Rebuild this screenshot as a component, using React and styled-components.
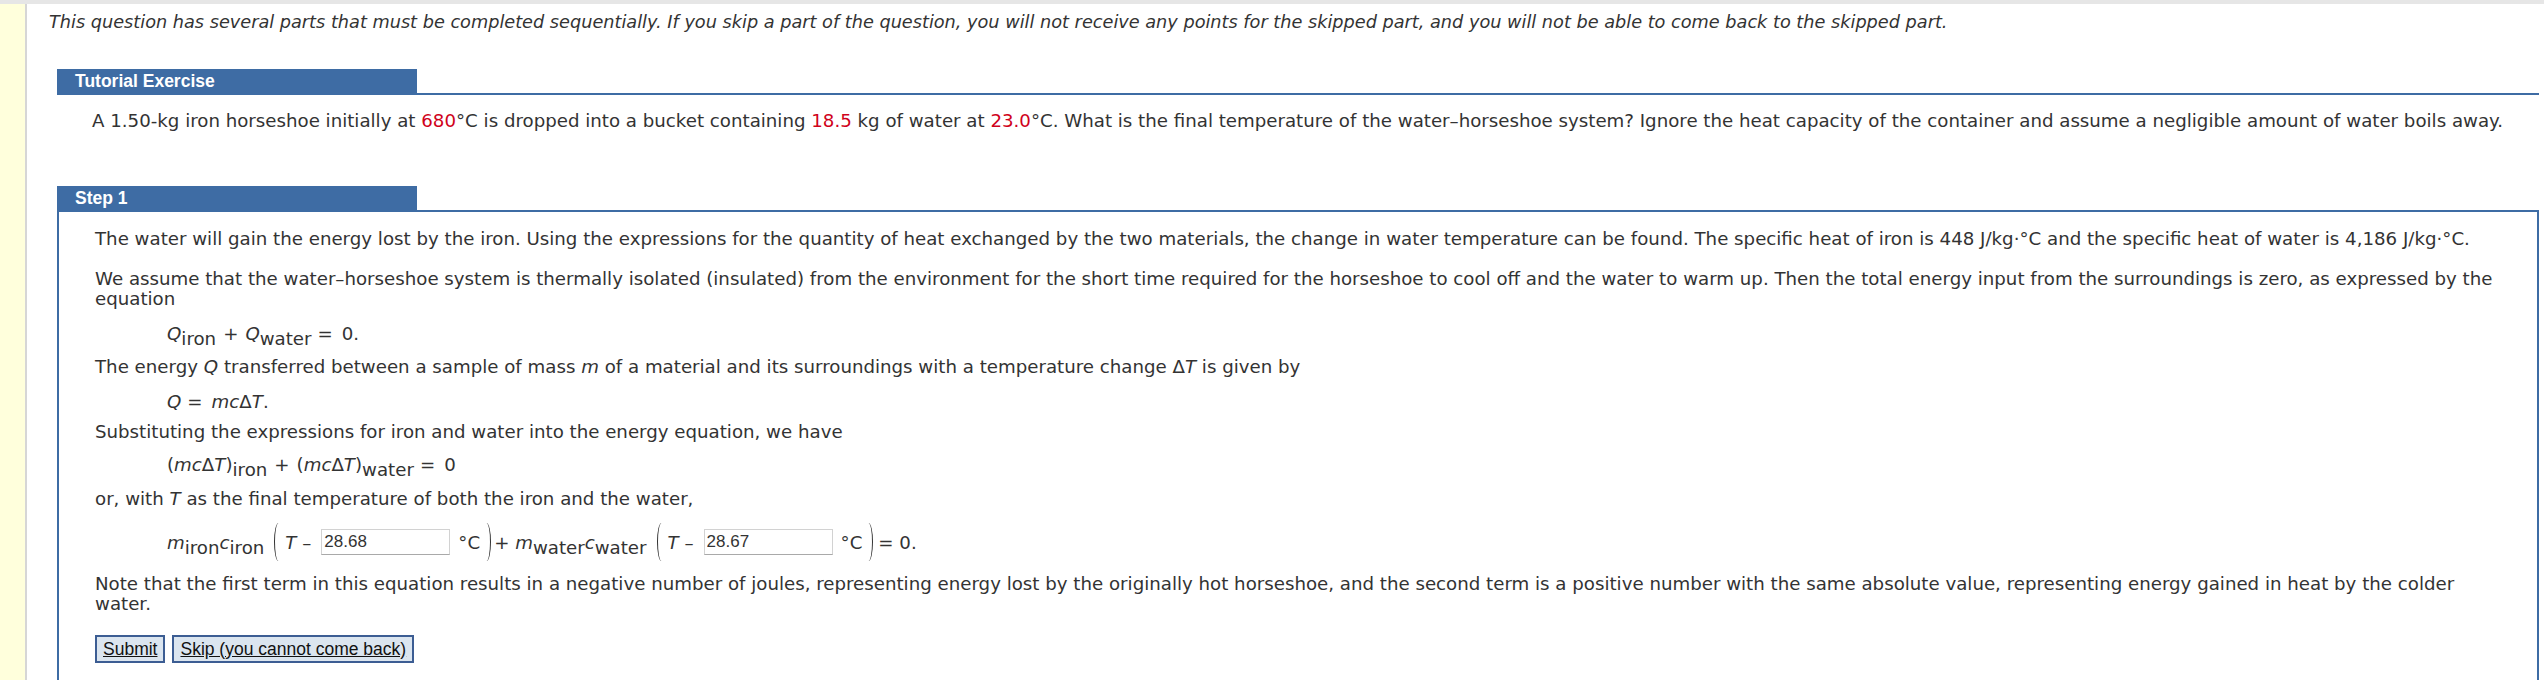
import React from "react";
import styled, { createGlobalStyle, css } from "styled-components";

const blue = "#3e6ca4";

const GlobalStyle = createGlobalStyle`
  html, body {
    margin: 0;
    padding: 0;
    background: #fff;
  }
  body {
    font-family: "DejaVu Sans", Verdana, sans-serif;
    color: #333;
  }
`;

const Page = styled.div`
  display: flex;
  min-height: 676px;
  border-top: 4px solid #e6e6e6;
`;

const Gutter = styled.div`
  flex: none;
  width: 25px;
  background: #ffffdc;
  border-right: 2px solid #d6d6d6;
`;

const Main = styled.main`
  flex: 1;
  padding: 8px 5px 0 22px;
`;

const Notice = styled.p`
  margin: 0;
  font-size: 17.7px;
  line-height: 20px;
  font-style: italic;
  white-space: nowrap;
`;

const Section = styled.section`
  margin: ${(p) => p.$mt}px 0 0 8px;
`;

const SectionHead = styled.div`
  display: flex;
  border-bottom: 2px solid ${blue};
`;

const Tab = styled.div`
  width: 342px;
  height: 24px;
  padding-left: 18px;
  background: ${blue};
  color: #fff;
  font: bold 17.5px/24px "Liberation Sans", Arial, sans-serif;
`;

const SectionBody = styled.div`
  padding: ${(p) => (p.$boxed ? "17px 8px 40px 36px" : "16px 0 0 35px")};
  ${(p) =>
    p.$boxed &&
    css`
      border: 2px solid ${blue};
      border-top: none;
    `}
`;

const Para = styled.p`
  margin: ${(p) => p.$mt || 0}px 0 0;
  font-size: 18.2px;
  line-height: 20px;
  white-space: nowrap;
`;

const Red = styled.span`
  color: #d0021b;
`;

const Equation = styled.div`
  margin: ${(p) => p.$mt || 0}px 0 0 72px;
  font-size: 18.2px;
  line-height: 20px;
  white-space: nowrap;
`;

const EquationRow = styled.div`
  display: flex;
  align-items: center;
  height: 40px;
  margin: ${(p) => p.$mt || 0}px 0 0 72px;
  font-size: 18.2px;
  white-space: nowrap;
`;

const V = styled.i`
  font-style: italic;
`;

const Sub = styled.sub`
  font-size: inherit;
  line-height: 0;
  vertical-align: -5px;
`;

const Op = styled.span`
  margin: 0 ${(p) => p.$r ?? 7}px 0 ${(p) => p.$l ?? 7}px;
`;

const Paren = styled.span`
  flex: none;
  width: 9px;
  height: 38px;
  margin-left: ${(p) => p.$ml || 0}px;
  box-sizing: border-box;
  border-radius: 50%;
  ${(p) =>
    p.$close
      ? css`
          border-right: 1.5px solid #333;
        `
      : css`
          border-left: 1.5px solid #333;
        `}
`;

const Piece = styled.span`
  margin-left: ${(p) => p.$ml || 0}px;
`;

const Answer = styled.input`
  width: 129px;
  height: 26px;
  box-sizing: border-box;
  margin-left: ${(p) => p.$ml || 0}px;
  padding: 0 2px;
  border: 1px solid #d2d2d2;
  border-bottom-color: #a9a9a9;
  background: #fff;
  color: #333;
  font: 17px "Liberation Sans", Arial, sans-serif;
  outline: none;
`;

const Actions = styled.div`
  display: flex;
  gap: 7px;
  margin-top: 21px;
`;

const Button = styled.button`
  height: 28px;
  padding: 0 6px;
  border: 2px solid #3c5d93;
  background: #dbe5ef;
  color: #111;
  font: 17.5px "Liberation Sans", Arial, sans-serif;
  text-decoration: underline;
  cursor: pointer;
`;

const DT = () => (
  <>
    <V>mc</V>Δ<V>T</V>
  </>
);

export default function App() {
  return (
    <>
      <GlobalStyle />
      <Page>
        <Gutter />
        <Main>
          <Notice>
            This question has several parts that must be completed sequentially. If you skip a part of the
            question, you will not receive any points for the skipped part, and you will not be able to come
            back to the skipped part.
          </Notice>

          <Section $mt={37}>
            <SectionHead>
              <Tab>Tutorial Exercise</Tab>
            </SectionHead>
            <SectionBody>
              <Para>
                A 1.50-kg iron horseshoe initially at <Red>680</Red>°C is dropped into a bucket containing{" "}
                <Red>18.5</Red> kg of water at <Red>23.0</Red>°C. What is the final temperature of the
                water–horseshoe system? Ignore the heat capacity of the container and assume a negligible amount
                of water boils away.
              </Para>
            </SectionBody>
          </Section>

          <Section $mt={55}>
            <SectionHead>
              <Tab>Step 1</Tab>
            </SectionHead>
            <SectionBody $boxed>
              <Para>
                The water will gain the energy lost by the iron. Using the expressions for the quantity of heat
                exchanged by the two materials, the change in water temperature can be found. The specific heat
                of iron is 448 J/kg·°C and the specific heat of water is 4,186 J/kg·°C.
              </Para>
              <Para $mt={20}>
                We assume that the water–horseshoe system is thermally isolated (insulated) from the environment
                for the short time required for the horseshoe to cool off and the water to warm up. Then the
                total energy input from the surroundings is zero, as expressed by the
                <br />
                equation
              </Para>
              <Equation $mt={15}>
                <V>Q</V>
                <Sub>iron</Sub>
                <Op>+</Op>
                <V>Q</V>
                <Sub>water</Sub>
                <Op $l={6} $r={9}>=</Op>0.
              </Equation>
              <Para $mt={13}>
                The energy <V>Q</V> transferred between a sample of mass <V>m</V> of a material and its
                surroundings with a temperature change Δ<V>T</V> is given by
              </Para>
              <Equation $mt={15}>
                <V>Q</V>
                <Op $l={6} $r={9}>=</Op>
                <DT />.
              </Equation>
              <Para $mt={10}>Substituting the expressions for iron and water into the energy equation, we have</Para>
              <Equation $mt={13}>
                (<DT />)<Sub>iron</Sub>
                <Op>+</Op>(<DT />)<Sub>water</Sub>
                <Op $l={6} $r={9}>=</Op>0
              </Equation>
              <Para $mt={14}>
                or, with <V>T</V> as the final temperature of both the iron and the water,
              </Para>
              <EquationRow $mt={13}>
                <Piece>
                  <V>m</V>
                  <Sub>iron</Sub>
                  <V>c</V>
                  <Sub>iron</Sub>
                </Piece>
                <Paren $ml={10} />
                <Piece $ml={2}>
                  <V>T</V> –
                </Piece>
                <Answer $ml={10} defaultValue="28.68" />
                <Piece $ml={8}>°C</Piece>
                <Paren $close $ml={2} />
                <Piece $ml={3}>
                  + <V>m</V>
                  <Sub>water</Sub>
                  <V>c</V>
                  <Sub>water</Sub>
                </Piece>
                <Paren $ml={10} />
                <Piece $ml={2}>
                  <V>T</V> –
                </Piece>
                <Answer $ml={10} defaultValue="28.67" />
                <Piece $ml={8}>°C</Piece>
                <Paren $close $ml={2} />
                <Piece $ml={5}>= 0.</Piece>
              </EquationRow>
              <Para $mt={12}>
                Note that the first term in this equation results in a negative number of joules, representing
                energy lost by the originally hot horseshoe, and the second term is a positive number with the
                same absolute value, representing energy gained in heat by the colder
                <br />
                water.
              </Para>
              <Actions>
                <Button type="button">Submit</Button>
                <Button type="button">Skip (you cannot come back)</Button>
              </Actions>
            </SectionBody>
          </Section>
        </Main>
      </Page>
    </>
  );
}
